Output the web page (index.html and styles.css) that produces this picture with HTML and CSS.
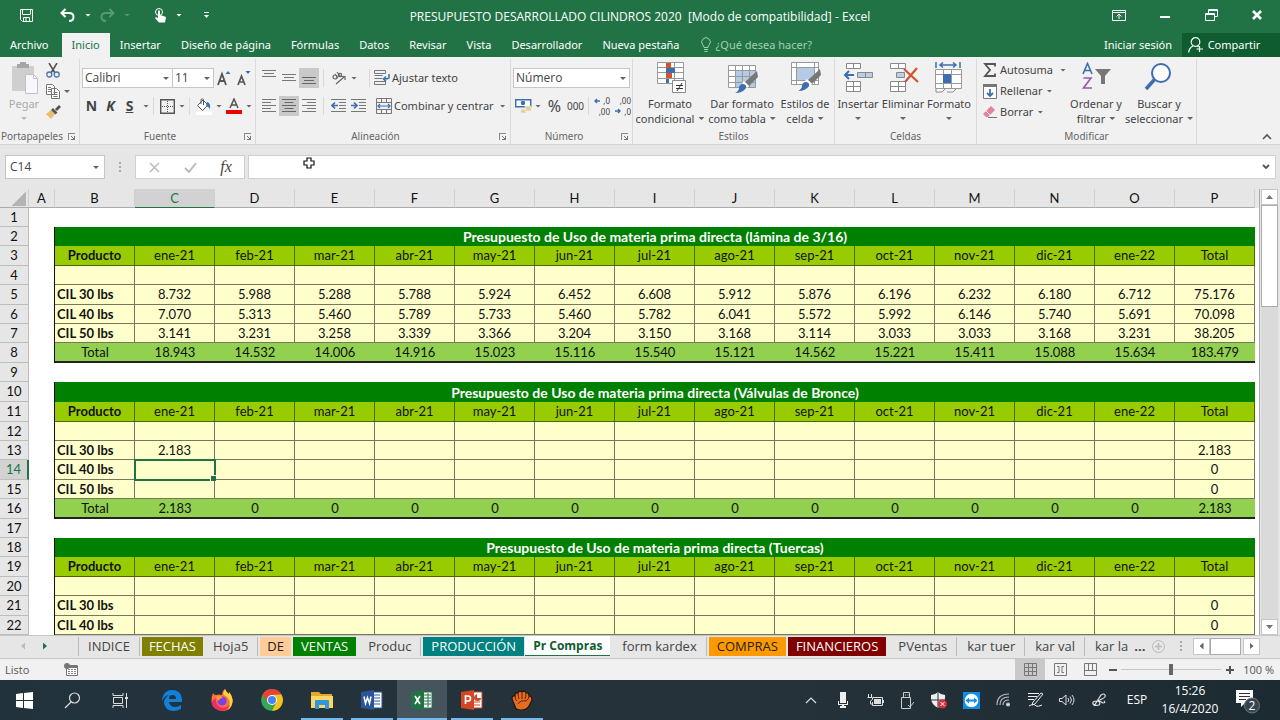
FILE: index.html
```html
<!DOCTYPE html>
<html lang="es">
<head>
<meta charset="utf-8">
<title>PRESUPUESTO DESARROLLADO CILINDROS 2020 - Excel</title>
<link rel="stylesheet" href="styles.css">
</head>
<body>
<header class="titlebar">
  <div class="quick">
    <button class="q-save" aria-label="Guardar"><svg width="13" height="13" viewBox="0 0 13 13" fill="none" stroke="#fff"><path d="M.5.5h12v12H2.500l-2-2zM2.500.5v5h8v-5M3.500 12.500v-4h6v4M6 9v3"/></svg></button>
    <button class="q-undo" aria-label="Deshacer"><svg width="16" height="14" viewBox="0 0 16 14" fill="none" stroke="#fff" stroke-width="2"><path d="M5.500 1 1.500 5l4 4M2 5h7q4.500 0 4.500 4t-4.500 4"/></svg></button><i class="dd light"></i>
    <button class="q-redo" aria-label="Rehacer"><svg width="16" height="14" viewBox="0 0 16 14" fill="none" stroke="#569976" stroke-width="2"><path d="m10.500 1 4 4-4 4M14 5H7q-4.500 0-4.500 4T7 13"/></svg></button><i class="dd faded"></i>
    <button class="q-touch" aria-label="Modo táctil"><svg width="13" height="15" viewBox="0 0 13 15"><circle cx="5" cy="4" r="3.500" fill="none" stroke="#fff"/><path fill="#fff" d="M4 3q1-1.500 2 0v4l5 1.500 1 1-1 5H5L1 10l1-1 2 1z"/></svg></button><i class="dd light"></i>
    <button class="q-more" aria-label="Personalizar"><svg width="5" height="6" viewBox="0 0 5 6" fill="#fff"><path d="M0 0h5v1H0zM0 3h5L2.500 6z"/></svg></button>
  </div>
  <h1>PRESUPUESTO DESARROLLADO CILINDROS 2020&nbsp; [Modo de compatibilidad] - Excel</h1>
  <div class="winctl">
    <button aria-label="Opciones de cinta"><svg width="14" height="11" viewBox="0 0 14 11" fill="none" stroke="#fff"><path d="M.5.5h13v10H.5zM.5 2.500h13M7 9V4M4.500 6.500 7 4l2.500 2.500"/></svg></button>
    <button aria-label="Minimizar"><svg width="10" height="11" viewBox="0 0 10 11"><path d="M0 6h10v2H0z" fill="#fff"/></svg></button>
    <button aria-label="Restaurar"><svg width="13" height="12" viewBox="0 0 13 12" fill="none" stroke="#fff"><path d="M.5 4.500h9v7h-9zM.5 5.500h9M3.500 4V.5h9v7H10M3.500 1.500h9"/></svg></button>
    <button aria-label="Cerrar"><svg width="10" height="10" viewBox="0 0 10 10"><path d="m1 1 8 8M9 1 1 9" stroke="#fff" stroke-width="2.600"/></svg></button>
  </div>
</header>
<nav class="tabs">
  <button>Archivo</button><button class="on">Inicio</button><button>Insertar</button><button>Diseño de página</button><button>Fórmulas</button><button>Datos</button><button>Revisar</button><button>Vista</button><button>Desarrollador</button><button>Nueva pestaña</button>
  <button class="tell"><svg width="12" height="15" viewBox="0 0 12 15" fill="none" stroke="#9fd0b4"><path d="M4 10.500q0-1.500-1.500-3a4.300 4.300 0 1 1 7 0Q8 9 8 10.500zM4 12.500h4M4.500 14.500h3"/></svg>¿Qué desea hacer?</button>
  <button class="signin">Iniciar sesión</button>
  <button class="share"><svg width="15" height="16" viewBox="0 0 15 16" fill="none" stroke="#fff" stroke-width="1.200"><circle cx="7.500" cy="5" r="4.300"/><path d="M.7 15.500Q1 11 5 9M9.500 9l1 1M11.500 9v6M8.500 12H15"/></svg>Compartir</button>
</nav>
<main class="ribbon">
  <section class="group g-clip">
    <div class="body">
      <button class="big paste"><svg width="30" height="32" viewBox="0 0 30 32"><path d="M3 4h22v25H3z" fill="#cfcfcf"/><path d="M8 2h3V0h6v2h3v4H8z" fill="#a6a6a6"/><path d="M16.500 12.500h8l4 4v15h-12z" fill="#faf7fc" stroke="#c3bfc6"/><path d="M24.500 12.500v4h4" fill="none" stroke="#c3bfc6"/></svg><span>Pegar</span><i class="dd faint"></i></button>
      <div class="stack">
        <button aria-label="Cortar"><svg width="14" height="15" viewBox="0 0 14 15" fill="none"><path d="m3 0 6 10M11 0 5 10" stroke="#555" stroke-width="1.600"/><circle cx="3.300" cy="11.500" r="2.500" stroke="#4a77ad" stroke-width="1.300"/><circle cx="10.700" cy="11.500" r="2.500" stroke="#4a77ad" stroke-width="1.300"/></svg></button>
        <button aria-label="Copiar"><svg width="14" height="15" viewBox="0 0 14 15" fill="#fff" stroke="#777"><path d="M.5.5h6l2 2v8h-8zM5.500 4.500h5l3 3v7h-8z"/><path d="M2 3.500h3M2 5.500h3M2 7.500h3M7.500 8.500h4M7.500 10.500h4M7.500 12.500h4"/></svg><i class="dd"></i></button>
        <button aria-label="Copiar formato"><svg width="15" height="14" viewBox="0 0 15 14"><path d="m0 9 5-4 4 4-4 5z" fill="#e9bf6e"/><path d="m5 5 2-2 4.500 4.500-2 2zM9 4l4-4 2 2-4 4z" fill="#555"/></svg></button>
      </div>
    </div>
    <footer><span>Portapapeles</span><button class="launch" aria-label="Más de Portapapeles"></button></footer>
  </section>
  <section class="group g-font">
    <div class="body rows">
      <div class="row">
        <label class="pick w-font"><select aria-label="Fuente"><option>Calibri</option></select></label><label class="pick w-size"><select aria-label="Tamaño"><option>11</option></select></label>
        <button class="grow" aria-label="Aumentar fuente"><svg width="14" height="15" viewBox="0 0 14 15"><path d="m1 14 4-11 4 11M2.500 10h5" fill="none" stroke="#555" stroke-width="1.800"/><path d="m8.500 3 2.500-3 2.500 3z" fill="#3c6eb0"/></svg></button>
        <button class="shrink" aria-label="Reducir fuente"><svg width="14" height="15" viewBox="0 0 14 15"><path d="M1 14 4.500 5 8 14M2.300 11h4.500" fill="none" stroke="#555" stroke-width="1.700"/><path d="M8.500 0h5L11 3z" fill="#3c6eb0"/></svg></button>
      </div>
      <div class="row marks">
        <button class="glyph"><b>N</b></button><button class="glyph"><b><em>K</em></b></button><button class="glyph"><b><u>S</u></b></button><i class="dd"></i><i class="sep"></i>
        <button class="pad" aria-label="Bordes"><svg width="15" height="15" viewBox="0 0 15 15" fill="none" stroke="#555"><path d="M.7.7h13.600v13.600H.7z" stroke-width="1.400"/><path d="M7.500 2v12M2 7.500h12" stroke-dasharray="1 1"/></svg></button><i class="dd"></i><i class="sep"></i>
        <button class="pad" aria-label="Relleno"><svg width="16" height="17" viewBox="0 0 16 17"><path d="m7 2 5 5-5.500 5.500-5-5z" fill="#fff" stroke="#555"/><path d="M5 6V1.500q1-1.500 2.500 0V7" fill="none" stroke="#555"/><path d="M11 4q4 1 3 7-2-3-4-3z" fill="#3c6eb0"/><path d="M0 13.500h16V17H0z" fill="#fff"/></svg></button><i class="dd"></i>
        <button class="pad2" aria-label="Color de fuente"><svg width="16" height="16" viewBox="0 0 16 16"><path d="m4 10 4-9 4 9M5.500 7h5" fill="none" stroke="#555" stroke-width="1.500"/><path d="M0 12h16v4H0z" fill="#e00"/></svg></button><i class="dd"></i>
      </div>
    </div>
    <footer><span>Fuente</span><button class="launch" aria-label="Más de Fuente"></button></footer>
  </section>
  <section class="group g-align">
    <div class="body rows">
      <div class="row">
        <button class="al" aria-label="Alinear arriba"><svg width="14" height="16" viewBox="0 0 14 16" stroke="#777"><path d="M0 .5h14M2 3.500h10M0 6.500h14"/></svg></button><button class="al" aria-label="Alinear en medio"><svg width="14" height="16" viewBox="0 0 14 16" stroke="#777"><path d="M0 4.500h14M2 7.500h10M0 10.500h14"/></svg></button><button class="al on" aria-label="Alinear abajo"><svg width="14" height="16" viewBox="0 0 14 16" stroke="#666"><path d="M0 7.500h14M2 10.500h10M0 13.500h14"/></svg></button><i class="sep"></i>
        <button class="orient" aria-label="Orientación"><svg width="15" height="14" viewBox="0 0 15 14" fill="none" stroke="#666" stroke-width="1.200"><circle cx="3" cy="6" r="2"/><path d="m3 3 3 4M5 1l4 5"/><circle cx="8" cy="4" r="1.700"/><path d="m4 13 8-7M9.500 5.500H13V9"/></svg></button><i class="dd"></i><i class="sep far1"></i>
        <button class="txt"><svg width="16" height="16" viewBox="0 0 16 16" fill="none"><path d="M.5.5h11v3H.5zM.5 5.500h8M.5 8.500h8M.5 11.500h11v3H.5z" stroke="#777"/><path d="M15 4v4q-1 1-5 1M12 6.500 9.500 9l2.500 2.500" stroke="#3c6eb0" stroke-width="1.500"/></svg>Ajustar texto</button>
      </div>
      <div class="row">
        <button class="al" aria-label="Izquierda"><svg width="14" height="16" viewBox="0 0 14 16" stroke="#777"><path d="M0 1.500h14M0 4.500h9M0 7.500h14M0 10.500h9M0 13.500h14"/></svg></button><button class="al on" aria-label="Centrar"><svg width="14" height="16" viewBox="0 0 14 16" stroke="#666"><path d="M0 1.500h14M2.500 4.500h9M0 7.500h14M2.500 10.500h9M0 13.500h14"/></svg></button><button class="al" aria-label="Derecha"><svg width="14" height="16" viewBox="0 0 14 16" stroke="#777"><path d="M0 1.500h14M5 4.500h9M0 7.500h14M5 10.500h9M0 13.500h14"/></svg></button><i class="sep"></i>
        <button class="al" aria-label="Reducir sangría"><svg width="15" height="16" viewBox="0 0 15 16" fill="none" stroke="#777"><path d="M0 1.500h15M8 4.500h7M8 7.500h7M8 10.500h7M0 13.500h15"/><path d="M7 7.500H1M4 4.500l-3 3 3 3" stroke="#3c6eb0" stroke-width="1.700"/></svg></button><button class="al" aria-label="Aumentar sangría"><svg width="15" height="16" viewBox="0 0 15 16" fill="none" stroke="#777"><path d="M0 1.500h15M8 4.500h7M8 7.500h7M8 10.500h7M0 13.500h15"/><path d="M0 7.500h6M3 4.500l3 3-3 3" stroke="#3c6eb0" stroke-width="1.700"/></svg></button><i class="sep far2"></i>
        <button class="txt"><svg width="16" height="16" viewBox="0 0 16 16" fill="none" stroke="#777"><path d="M.5.5h15v15H.5zM.5 4.500h15M.5 11.500h15M5.500.5v4M10.500.5v4M5.500 11.500v4M10.500 11.500v4"/><path d="M2 8h12M4 6 2 8l2 2M12 6l2 2-2 2" stroke="#3c6eb0" stroke-width="1.200"/></svg>Combinar y centrar</button><i class="dd last"></i>
      </div>
    </div>
    <footer><span>Alineación</span><button class="launch" aria-label="Más de Alineación"></button></footer>
  </section>
  <section class="group g-num">
    <div class="body rows">
      <div class="row"><label class="pick w-num"><select aria-label="Formato de número"><option>Número</option></select></label></div>
      <div class="row nums">
        <button aria-label="Moneda"><svg width="17" height="16" viewBox="0 0 17 16"><path d="M.7 1.700h15v7h-15z" fill="#fff" stroke="#3c6eb0" stroke-width="1.500"/><circle cx="8" cy="5" r="2.200" fill="#3c6eb0"/><path d="M10 8h6v5h-6zM6 11h5v4H6z" fill="#e9cf95" stroke="#f1f1f1" stroke-width=".5"/></svg></button><i class="dd"></i><button class="pct">%</button><button class="mil">000</button><i class="sep"></i>
        <button class="dec" aria-label="Aumentar decimales"><span>,0</span><span>,00</span><svg width="6" height="6" viewBox="0 0 6 6"><path d="M6 3H1m2-2L1 3l2 2" fill="none" stroke="#3c6eb0" stroke-width="1.400"/></svg></button>
        <button class="dec low" aria-label="Disminuir decimales"><span>,00</span><span>,0</span><svg width="6" height="6" viewBox="0 0 6 6"><path d="M0 3h5M3 1l2 2-2 2" fill="none" stroke="#3c6eb0" stroke-width="1.400"/></svg></button>
      </div>
    </div>
    <footer><span>Número</span><button class="launch" aria-label="Más de Número"></button></footer>
  </section>
  <section class="group g-style">
    <div class="body">
      <button class="big b-cond"><svg width="32" height="32" viewBox="0 0 32 32"><path d="M3.500.5h26v21h-26zM3.500 5.500h26M3.500 10.500h26M3.500 16.500h26M12.500.5v21M20.500.5v21" fill="#fff" stroke="#999"/><path d="M12 1h5v5h-5zM12 11h6v5h-6z" fill="#d35230"/><path d="M12 6h9v5h-9zM12 17h3v4h-3z" fill="#3c6eb0"/><path d="M18.500 18.500h13v12h-13z" fill="#fff" stroke="#888"/><path d="M22 23.500h7M22 26.500h7M28 21l-5 8" stroke="#333"/></svg><span>Formato</span><span>condicional<i class="dd"></i></span></button>
      <button class="big b-table"><svg width="32" height="32" viewBox="0 0 32 32"><path d="M2.500 3.500h27v22h-27z" fill="#fff"/><path d="M9 9h20v16H9z" fill="#b4cbe6"/><path d="M2.500 3.500h27v22h-27zM2.500 8.500h27M2.500 14.500h27M2.500 20.500h27M9.500 3.500v22M16.500 3.500v22M23.500 3.500v22" fill="none" stroke="#999"/><path d="m31 9 1 6-9 9-4-4z" fill="#777"/><path d="m18 19 5 5-2 2-5-5z" fill="#fff"/><path d="M16 22q5 0 4 4-3 5-11 5 4-2 4-5 0-3 3-4z" fill="#3c6eb0"/></svg><span>Dar formato</span><span>como tabla<i class="dd"></i></span></button>
      <button class="big b-cell"><svg width="32" height="32" viewBox="0 0 32 32"><path d="M2.500.5h27v22h-27z" fill="#fff" stroke="#999"/><path d="M8 6h17v12H8z" fill="#b4cbe6"/><path d="M2.500 5.500h27M2.500 18.500h27M7.500.5v22M25.500.5v22" stroke="#999"/><path d="m31 7 1 6-9 9-4-4z" fill="#777"/><path d="m18 17 5 5-2 2-5-5z" fill="#fff"/><path d="M16 20q5 0 4 4-3 5-11 5 4-2 4-5 0-3 3-4z" fill="#3c6eb0"/></svg><span>Estilos de</span><span>celda<i class="dd"></i></span></button>
    </div>
    <footer><span>Estilos</span></footer>
  </section>
  <section class="group g-cells">
    <div class="body">
      <button class="big b-ins"><svg width="32" height="32" viewBox="0 0 32 32"><path d="M4.500 1.500h14v5h-14zM11.500 1.500v5M4.500 19.500h14v10h-14zM4.500 24.500h14M11.500 19.500v10" fill="#fff" stroke="#888"/><path d="M15.500 10.500h15v5h-15zM23.500 10.500v5" fill="#b9cfe6" stroke="#888"/><path d="M12 13H3m4-4-4 4 4 4" fill="none" stroke="#3c6eb0" stroke-width="2"/></svg><span>Insertar</span><i class="dd"></i></button>
      <button class="big b-del"><svg width="32" height="32" viewBox="0 0 32 32"><path d="M3.500 1.500h15v5h-15zM11.500 1.500v5M3.500 19.500h15v10h-15zM3.500 24.500h15M11.500 19.500v10" fill="#fff" stroke="#888"/><path d="M9.500 10.500h8v5h-8z" fill="#b9cfe6" stroke="#888"/><path d="m17 7 14 13M30 6 18 20" fill="none" stroke="#d35230" stroke-width="2.200"/></svg><span>Eliminar</span><i class="dd"></i></button>
      <button class="big b-fmt"><svg width="32" height="32" viewBox="0 0 32 32"><path d="M3 0v6M27 0v6M7 3h16M10 .5 7 3l3 2.500M20 .5 23 3l-3 2.500" fill="none" stroke="#3c6eb0" stroke-width="1.500"/><path d="M2.500 7.500h26v19h-26zM2.500 12.500h26M2.500 21.500h26M10.500 7.500v19M18.500 7.500v19" fill="#fff" stroke="#999"/><path d="M10 12h8v9h-8z" fill="#3c6eb0"/><path d="M3 27v3h6l3-3m2 3h6l3-3" fill="#fff" stroke="#888"/></svg><span>Formato</span><i class="dd"></i></button>
    </div>
    <footer><span>Celdas</span></footer>
  </section>
  <section class="group g-edit">
    <div class="body">
      <div class="stack words">
        <button><svg width="14" height="14" viewBox="0 0 14 14"><path d="M12 3.500V1H2l5 6-5 6h10v-2.500" fill="none" stroke="#555" stroke-width="1.800"/></svg>Autosuma<i class="dd wide"></i></button>
        <button><svg width="14" height="15" viewBox="0 0 14 15"><path d="M.5.5h13v14H.5z" fill="#fff" stroke="#777"/><path d="M0 0h14v3H0z" fill="#777"/><path d="M7 5v7M4 9l3 3 3-3" fill="none" stroke="#3c6eb0" stroke-width="1.800"/></svg>Rellenar<i class="dd"></i></button>
        <button><svg width="14" height="14" viewBox="0 0 14 14"><path d="m0 9 8-8 4 4-7 7H3z" fill="#e2849b"/><path d="m3 6 4 4" stroke="#f1f1f1"/><path d="M5 12.500h9" stroke="#777"/></svg>Borrar<i class="dd"></i></button>
      </div>
      <button class="big b-sort"><svg width="32" height="32" viewBox="0 0 32 32" fill="none"><path d="m3 12 4.500-10.500L12 12M4.500 8.500h6" stroke="#3c6eb0" stroke-width="1.600"/><path d="M3.500 16H11L3.500 26H12" stroke="#9458b0" stroke-width="1.600"/><path d="M15 7h16l-6 7v8h-4v-8z" fill="#777"/></svg><span>Ordenar y</span><span>filtrar<i class="dd"></i></span></button>
      <button class="big b-find"><svg width="32" height="32" viewBox="0 0 32 32" fill="none"><circle cx="18" cy="11" r="9" fill="#fff" stroke="#3c6eb0" stroke-width="2"/><path d="M11.500 17.500 3 27" stroke="#3c6eb0" stroke-width="3.500"/></svg><span>Buscar y</span><span>seleccionar<i class="dd"></i></span></button>
    </div>
    <footer><span>Modificar</span></footer>
  </section>
  <button class="collapse" aria-label="Contraer la cinta"><svg width="10" height="7" viewBox="0 0 10 7"><path d="m1 6 4-4 4 4" fill="none" stroke="#555" stroke-width="1.600"/></svg></button>
</main>
<section class="formula">
  <label class="pick namebox"><select aria-label="Cuadro de nombres"><option>C14</option></select></label>
  <i class="dots"></i>
  <div class="fx">
    <button aria-label="Cancelar"><svg width="11" height="11" viewBox="0 0 11 11"><path d="m1 1 9 9M10 1l-9 9" stroke="#bbb" stroke-width="1.500"/></svg></button>
    <button aria-label="Introducir"><svg width="13" height="11" viewBox="0 0 13 11"><path d="m1 6 4 4 7-9" fill="none" stroke="#bbb" stroke-width="2"/></svg></button>
    <button class="fn"><em>fx</em></button>
  </div>
  <div class="entry"><input type="text" aria-label="Barra de fórmulas"><button aria-label="Expandir"><svg width="8" height="6" viewBox="0 0 8 6"><path d="m1 1 3 3 3-3" fill="none" stroke="#555" stroke-width="1.800"/></svg></button>
  <svg class="cursor" width="12" height="12" viewBox="0 0 12 12"><path d="M4 1h4v3h3v4H8v3H4V8H1V4h3z" fill="#fff" stroke="#111" stroke-width="1.200"/></svg></div>
</section>
<section class="sheetarea">
<div class="view">
<table class="sheet">
<colgroup><col class="c-num"><col class="c-a"><col span="15" class="c-std"></colgroup>
<thead><tr><th class="corner"></th><th>A</th><th>B</th><th class="sel">C</th><th>D</th><th>E</th><th>F</th><th>G</th><th>H</th><th>I</th><th>J</th><th>K</th><th>L</th><th>M</th><th>N</th><th>O</th><th>P</th></tr></thead>
<tbody>
<tr><th>1</th><td colspan="16"></td></tr>
<tr class="ttl"><th>2</th><td></td><td colspan="15">Presupuesto de Uso de materia prima directa (lámina de 3/16)</td></tr>
<tr class="hd tall"><th>3</th><td></td><td>Producto</td><td>ene-21</td><td>feb-21</td><td>mar-21</td><td>abr-21</td><td>may-21</td><td>jun-21</td><td>jul-21</td><td>ago-21</td><td>sep-21</td><td>oct-21</td><td>nov-21</td><td>dic-21</td><td>ene-22</td><td>Total</td></tr>
<tr class="dt"><th>4</th><td></td><td></td><td></td><td></td><td></td><td></td><td></td><td></td><td></td><td></td><td></td><td></td><td></td><td></td><td></td><td></td></tr>
<tr class="dt tall"><th>5</th><td></td><td>CIL 30 lbs</td><td>8.732</td><td>5.988</td><td>5.288</td><td>5.788</td><td>5.924</td><td>6.452</td><td>6.608</td><td>5.912</td><td>5.876</td><td>6.196</td><td>6.232</td><td>6.180</td><td>6.712</td><td>75.176</td></tr>
<tr class="dt"><th>6</th><td></td><td>CIL 40 lbs</td><td>7.070</td><td>5.313</td><td>5.460</td><td>5.789</td><td>5.733</td><td>5.460</td><td>5.782</td><td>6.041</td><td>5.572</td><td>5.992</td><td>6.146</td><td>5.740</td><td>5.691</td><td>70.098</td></tr>
<tr class="dt"><th>7</th><td></td><td>CIL 50 lbs</td><td>3.141</td><td>3.231</td><td>3.258</td><td>3.339</td><td>3.366</td><td>3.204</td><td>3.150</td><td>3.168</td><td>3.114</td><td>3.033</td><td>3.033</td><td>3.168</td><td>3.231</td><td>38.205</td></tr>
<tr class="tt tall"><th>8</th><td></td><td>Total</td><td>18.943</td><td>14.532</td><td>14.006</td><td>14.916</td><td>15.023</td><td>15.116</td><td>15.540</td><td>15.121</td><td>14.562</td><td>15.221</td><td>15.411</td><td>15.088</td><td>15.634</td><td>183.479</td></tr>
<tr><th>9</th><td colspan="16"></td></tr>
<tr class="ttl tall"><th>10</th><td></td><td colspan="15">Presupuesto de Uso de materia prima directa (Válvulas de Bronce)</td></tr>
<tr class="hd tall"><th>11</th><td></td><td>Producto</td><td>ene-21</td><td>feb-21</td><td>mar-21</td><td>abr-21</td><td>may-21</td><td>jun-21</td><td>jul-21</td><td>ago-21</td><td>sep-21</td><td>oct-21</td><td>nov-21</td><td>dic-21</td><td>ene-22</td><td>Total</td></tr>
<tr class="dt"><th>12</th><td></td><td></td><td></td><td></td><td></td><td></td><td></td><td></td><td></td><td></td><td></td><td></td><td></td><td></td><td></td><td></td></tr>
<tr class="dt"><th>13</th><td></td><td>CIL 30 lbs</td><td>2.183</td><td></td><td></td><td></td><td></td><td></td><td></td><td></td><td></td><td></td><td></td><td></td><td></td><td>2.183</td></tr>
<tr class="dt tall"><th class="sel">14</th><td></td><td>CIL 40 lbs</td><td class="active"></td><td></td><td></td><td></td><td></td><td></td><td></td><td></td><td></td><td></td><td></td><td></td><td></td><td>0</td></tr>
<tr class="dt"><th>15</th><td></td><td>CIL 50 lbs</td><td></td><td></td><td></td><td></td><td></td><td></td><td></td><td></td><td></td><td></td><td></td><td></td><td></td><td>0</td></tr>
<tr class="tt tall"><th>16</th><td></td><td>Total</td><td>2.183</td><td>0</td><td>0</td><td>0</td><td>0</td><td>0</td><td>0</td><td>0</td><td>0</td><td>0</td><td>0</td><td>0</td><td>0</td><td>2.183</td></tr>
<tr><th>17</th><td colspan="16"></td></tr>
<tr class="ttl"><th>18</th><td></td><td colspan="15">Presupuesto de Uso de materia prima directa (Tuercas)</td></tr>
<tr class="hd tall"><th>19</th><td></td><td>Producto</td><td>ene-21</td><td>feb-21</td><td>mar-21</td><td>abr-21</td><td>may-21</td><td>jun-21</td><td>jul-21</td><td>ago-21</td><td>sep-21</td><td>oct-21</td><td>nov-21</td><td>dic-21</td><td>ene-22</td><td>Total</td></tr>
<tr class="dt"><th>20</th><td></td><td></td><td></td><td></td><td></td><td></td><td></td><td></td><td></td><td></td><td></td><td></td><td></td><td></td><td></td><td></td></tr>
<tr class="dt tall"><th>21</th><td></td><td>CIL 30 lbs</td><td></td><td></td><td></td><td></td><td></td><td></td><td></td><td></td><td></td><td></td><td></td><td></td><td></td><td>0</td></tr>
<tr class="dt"><th>22</th><td></td><td>CIL 40 lbs</td><td></td><td></td><td></td><td></td><td></td><td></td><td></td><td></td><td></td><td></td><td></td><td></td><td></td><td>0</td></tr>
<tr class="dt"><th></th><td></td><td></td><td></td><td></td><td></td><td></td><td></td><td></td><td></td><td></td><td></td><td></td><td></td><td></td><td></td><td></td></tr>
</tbody>
</table>
</div>
<div class="vscroll"><button class="up" aria-label="Subir"></button><div class="thumb"></div><button class="down" aria-label="Bajar"></button></div>
</section>
<nav class="sheettabs">
  <button class="prev" aria-label="Anterior"></button><button class="next" aria-label="Siguiente"></button>
  <button class="st plain first">INDICE</button><button class="st olive">FECHAS</button><button class="st plain">Hoja5</button><button class="st peach">DE</button><button class="st green">VENTAS</button><button class="st plain">Produc</button><button class="st teal">PRODUCCIÓN</button><button class="st current">Pr Compras</button><button class="st plain">form kardex</button><button class="st orange">COMPRAS</button><button class="st maroon">FINANCIEROS</button><button class="st plain">PVentas</button><button class="st plain">kar tuer</button><button class="st plain">kar val</button><button class="st plain cut">kar la<b>...</b></button>
  <button class="add" aria-label="Hoja nueva"><svg width="13" height="13" viewBox="0 0 13 13" fill="none" stroke="#bbb"><circle cx="6.500" cy="6.500" r="6"/><path d="M6.500 3v7M3 6.500h7" stroke-width="1.500"/></svg></button>
  <i class="dots"></i>
  <div class="hscroll"><button class="left" aria-label="Izquierda"></button><div class="thumb"></div><button class="right" aria-label="Derecha"></button></div>
</nav>
<footer class="status">
  <span>Listo</span>
  <button class="macro" aria-label="Grabar macro"><svg width="14" height="13" viewBox="0 0 14 13"><path d="M2.500 2.500h11v10h-11z" fill="#fff" stroke="#777"/><path d="M3 3h11v2H3z" fill="#777"/><path d="M4 6.500h8M4 8.500h8M4 10.500h8" stroke="#888" stroke-dasharray="2 1"/><circle cx="3" cy="3" r="3" fill="#777"/></svg></button>
  <div class="views">
    <button class="on" aria-label="Normal"><svg width="13" height="13" viewBox="0 0 13 13" fill="none" stroke="#777"><path d="M.5.5h12v12H.5zM.5 4.500h12M.5 8.500h12M4.500.5v12M8.500.5v12"/></svg></button>
    <button aria-label="Diseño de página"><svg width="13" height="13" viewBox="0 0 13 13" fill="none" stroke="#777"><path d="M.5.5h12v12H.5zM3 3.500h2v6H3M10 3.500H8v6h2"/></svg></button>
    <button aria-label="Saltos de página"><svg width="13" height="13" viewBox="0 0 13 13" fill="none" stroke="#777"><path d="M.5.5h12v12H.5zM.5 7.500h12M4.500.5v7M8.500.5v7"/></svg></button>
  </div>
  <button class="zm minus" aria-label="Alejar"></button><input type="range" min="0" max="100" value="50" aria-label="Zoom"><button class="zm plus" aria-label="Acercar"></button>
  <span class="pctv">100 %</span>
</footer>
<footer class="taskbar">
  <button class="sys" aria-label="Inicio"><svg width="17" height="17" viewBox="0 0 17 17" fill="#fff"><path d="m0 2 7-1v7H0zM8 1l9-1v8H8zM0 9h7v7l-7-1zM8 9h9v8l-9-1z"/></svg></button>
  <button class="sys" aria-label="Buscar"><svg width="17" height="17" viewBox="0 0 17 17" fill="none" stroke="#ddd" stroke-width="1.200"><circle cx="10.500" cy="6" r="5"/><path d="m7 10-6 6"/></svg></button>
  <button class="sys" aria-label="Vista de tareas"><svg width="17" height="17" viewBox="0 0 17 17" fill="none" stroke="#ddd"><path d="M1 1v2.500h10V1M1 16v-2.500h10V16M1.500 5.500h9v6h-9zM14.500 1v4M14.500 7v9"/><path d="M13 5h3v2h-3z" fill="#ddd" stroke="none"/></svg></button>
  <button class="app first" aria-label="Edge"><svg width="22" height="22" viewBox="0 0 22 22"><path d="M1 10Q3 1 11 1q9 0 10 9v3H8q1 5 6 5 3 0 6-2v4q-4 2-8 2-8-1-9-8 0-5 5-8-5 1-7 6zM8 10h7q0-4-3.500-4T8 10z" fill="#1180d8"/></svg></button>
  <button class="app" aria-label="Firefox"><svg width="24" height="24" viewBox="0 0 24 24"><path d="M3 5q1 2 3 2 3-1 6 0 0-4 3-6 1 3 4 5V4q4 5 3.500 10Q21 23 12 23 3 22 1.500 14 1 9 3 5z" fill="#ff7139"/><path d="M15 1q1 3 4 5V4q4 5 3.500 10-1 6-5 8 3-4 2-9-2-5-6-6 0-4 1.500-6z" fill="#ffd43a"/><path d="M1.500 14Q3 22 12 23q6-1 8-6-5 4-10 2-5-3-4-9-3 2-4.500 4z" fill="#f12b68"/><circle cx="12" cy="13" r="4.500" fill="#7542e5"/><path d="M6 9q4-3 7 1-4 0-4 3-2-1-3-4z" fill="#ff9a2e"/></svg></button>
  <button class="app" aria-label="Chrome"><svg width="22" height="22" viewBox="0 0 22 22"><circle cx="11" cy="11" r="10.800" fill="#34a853"/><path d="M1.600 5.600A10.800 10.800 0 0 1 20.400 5.600L11 6 6.700 13.500z" fill="#ea4335"/><path d="M20.400 5.600A10.800 10.800 0 0 1 11 21.800L15.300 13.500 11 6z" fill="#fbc117"/><circle cx="11" cy="11" r="5" fill="#fff"/><circle cx="11" cy="11" r="4" fill="#4285f4"/></svg></button>
  <button class="app run" aria-label="Explorador"><svg width="22" height="18" viewBox="0 0 22 18"><path d="M0 1h8l2 2h11v14H0z" fill="#e5a82a"/><path d="M0 5h22v12H0z" fill="#fcd765"/><path d="M4 10q0-1 1-1h12q1 0 1 1v8h-4v-4H8v4H4z" fill="#3296dc"/></svg></button>
  <button class="app run" aria-label="Word"><svg width="22" height="20" viewBox="0 0 22 20"><path d="M12 2h9v16h-9z" fill="#fff" stroke="#2b579a"/><path d="M13 5h6M13 8h6M13 11h6M13 14h6" stroke="#2b579a"/><path d="m0 2 13-2v20L0 18z" fill="#2b579a"/><path d="m3 6.500 1.500 7 2-6 2 6 1.500-7" fill="none" stroke="#fff" stroke-width="1.500"/></svg></button>
  <button class="app run cur" aria-label="Excel"><svg width="22" height="20" viewBox="0 0 22 20"><path d="M12 2h9v16h-9z" fill="#fff" stroke="#217346"/><path d="M13 5h7M13 8h7M13 11h7M13 14h7M17 3v14" stroke="#217346"/><path d="m0 2 13-2v20L0 18z" fill="#217346"/><path d="m4 6 5 8M9 6l-5 8" stroke="#fff" stroke-width="1.600"/></svg></button>
  <button class="app run" aria-label="PowerPoint"><svg width="22" height="20" viewBox="0 0 22 20"><path d="M12 2h9v16h-9z" fill="#fff" stroke="#d24726"/><path d="M13 12h6M13 15h6" stroke="#d24726"/><path d="M16 4v4h4q0 3-3.500 3T13 8q0-3 3-4z" fill="#d24726"/><path d="m0 2 13-2v20L0 18z" fill="#d24726"/><path d="M4.500 14V6H7q2.500 0 2.500 2.500T7 11H5" fill="none" stroke="#fff" stroke-width="1.700"/></svg></button>
  <button class="app run" aria-label="Grabador"><svg width="22" height="20" viewBox="0 0 22 20"><path d="M1 9q0-4 3-3 0-4 3-3 1-3 4-1 3-2 4 1 3-1 3 3 3 0 3 4l-3 6q-2 4-8 4t-6-4z" fill="#e46b22" stroke="#2a1208" stroke-width="1.200"/><path d="M4 6q0 4 2 5M7 3q0 4 1 6M11 2v7M15 3q0 4-1 6M18 6q0 3-3 5-6-1-8 3" fill="none" stroke="#5c240c"/></svg></button>
  <div class="tray">
    <button aria-label="Mostrar iconos"><svg width="12" height="7" viewBox="0 0 12 7"><path d="m1 6 5-5 5 5" fill="none" stroke="#ddd" stroke-width="1.200"/></svg></button>
    <button aria-label="Micrófono"><svg width="10" height="16" viewBox="0 0 10 16" fill="#eee"><path d="M2 0h6v11H2zM0 9h1v3h8V9h1v4H6v1h2v2H2v-2h2v-1H0z"/></svg></button>
    <button aria-label="Batería"><svg width="17" height="12" viewBox="0 0 17 12" fill="none" stroke="#ddd"><path d="M6 3.500h9.500v8h-10V8M16.500 6v3M1.500 0v3M4.500 0v3M.5 3.500h5v2l-2 1.500v3h2"/><path d="M7 5h7v5H7z" fill="#ddd" stroke="none"/></svg></button>
    <button aria-label="USB"><svg width="14" height="17" viewBox="0 0 14 17" fill="none" stroke="#ccc"><path d="M3.500 5V.5h6V5M1.500 5.500h9v11h-9zM5 3h1M7.500 3h1M8 13l2 2 4-5"/></svg></button>
    <button aria-label="Seguridad"><svg width="16" height="17" viewBox="0 0 16 17"><path d="M0 3q4 0 7-3 3 3 7 3 1 9-7 13Q-1 12 0 3z" fill="#eee"/><path d="M7 0v16M0 8h14" stroke="#263138"/><circle cx="11.500" cy="12" r="4.500" fill="#d32f3c"/><path d="m9.500 10 4 4M13.500 10l-4 4" stroke="#fff"/></svg></button>
    <button aria-label="TeamViewer"><svg width="17" height="17" viewBox="0 0 17 17"><path d="M0 0h17v17H0z" fill="#0e8ee9"/><circle cx="8.500" cy="8.500" r="6.800" fill="#fff"/><path d="m2.500 8.500 3.500-3v2h5v-2l3.500 3-3.500 3v-2H6v2z" fill="#0e8ee9"/></svg></button>
    <button aria-label="Red"><svg width="14" height="14" viewBox="0 0 14 14" fill="none" stroke="#bbb" stroke-width="1.200"><path d="M1 12Q1 1 13 1M4 12q0-8 9-8M7 12q0-5 6-5"/><circle cx="12" cy="11.500" r="1.500" fill="#eee"/></svg></button>
    <button aria-label="Lápiz"><svg width="15" height="16" viewBox="0 0 15 16" fill="none" stroke="#eee"><path d="M0 1.500h11M0 4.500h9M0 7.500h6M13 1 5 10l-1 3 3-1 8-10zM1 14q5-3 7 0 2 1 6-1"/></svg></button>
    <button aria-label="Volumen"><svg width="16" height="12" viewBox="0 0 16 12" fill="none" stroke="#ddd"><path d="M.5 4.500H3L7 1v10L3 7.500H.5zM9 4q1.500 2 0 4M11 2.500q3 3.500 0 7M13 1q4 5 0 10"/></svg></button>
    <button aria-label="Tinta"><svg width="14" height="14" viewBox="0 0 14 14" fill="none" stroke="#ddd" stroke-width="1.200"><path d="m2 13 7-11q3-2 4 0 1 2-3 4L6 8q3 2 1 4-4 1-6-1-1-3 4-3 4 0 6 2 3 0 1-2"/></svg></button>
    <button class="lang">ESP</button>
    <button class="clock"><span>15:26</span><span>16/4/2020</span></button>
    <button class="note" aria-label="Notificaciones"><svg width="24" height="24" viewBox="0 0 24 24"><path d="M0 0h17v13H9l-4 4v-4H0z" fill="#fff"/><path d="M3 3.500h11M3 6.500h11M3 9.500h7" stroke="#333"/><circle cx="16" cy="15.500" r="7.500" fill="#37444c" stroke="#707a80"/></svg><span>2</span></button>
  </div>
</footer>
</body>
</html>
```
FILE: styles.css
```css
* { box-sizing: border-box; }
body {
  margin: 0;
  height: 100vh;
  display: flex;
  flex-direction: column;
  overflow: hidden;
  background: #e6e6e6;
  color: #444;
  font: 12px/16px "Open Sans", "Noto Sans", sans-serif;
}
button, select, input { font: inherit; color: inherit; margin: 0; padding: 0; border: 0; background: none; }
button { display: flex; align-items: center; justify-content: center; white-space: nowrap; }
svg { display: block; flex: none; }

/* drop-down arrow, separators */
.dd { display: inline-block; flex: none; width: 6px; height: 3px; margin: 0 4px; background: #666; clip-path: polygon(0 0, 100% 0, 50% 100%); }
.dd.light { background: #fff; }
.dd.faded { background: #569976; }
.dd.faint { background: #bbb; }
.sep { flex: none; width: 1px; height: 18px; background: #d8d8d8; }

/* title bar */
.titlebar { flex: none; height: 33px; display: grid; grid-template-columns: 1fr auto 1fr; background: #217346; color: #fff; }
.titlebar h1 { margin: 0; font-size: 12px; font-weight: 400; line-height: 33px; }
.quick { display: flex; align-items: center; padding: 0 0 3px 20px; }
.quick .dd { margin: 0 8px 0 9px; }
.q-undo { margin-left: 27px; }
.q-touch { margin-left: 16px; }
.q-more { margin-left: 14px; }
.winctl { display: flex; justify-content: flex-end; padding-bottom: 3px; }
.winctl button { width: 46px; }

/* ribbon tabs */
.tabs { flex: none; height: 24px; display: flex; background: #217346; color: #fff; font: 11px/16px "Noto Sans", "Open Sans", sans-serif; }
.tabs button { padding: 0 10px 1px; }
.tabs button.on { background: #f1f1f1; color: #217346; margin-left: 3px; }
.tabs .tell { color: #9fd0b4; gap: 4px; }
.tabs .signin { margin-left: auto; }
.tabs .share { width: 98px; background: #0e5c2f; gap: 5px; padding: 0 18px 1px 4px; }

/* ribbon */
.ribbon { flex: none; height: 88px; display: flex; background: #f1f1f1; border-bottom: 1px solid #d2d2d2; font: 11px/16px "Noto Sans", "Open Sans", sans-serif; }
.group { flex: none; display: flex; flex-direction: column; border-right: 1px solid #dadada; margin: 2px 0 0; }
.group footer { display: flex; align-items: center; height: 16px; font-size: 10px; color: #666; }
.group footer span { flex: 1; text-align: center; white-space: nowrap; }
.body { flex: 1; display: flex; padding-top: 3px; }
.body.rows { flex-direction: column; gap: 6px; padding-top: 8px; }
.row { display: flex; align-items: center; height: 22px; }
.launch { width: 7px; height: 7px; margin: 0 4px; border: solid #888; border-width: 1px 0 0 1px; background-image: linear-gradient(#777, #777), linear-gradient(#777, #777), linear-gradient(45deg, transparent 42%, #777 42%, #777 58%, transparent 58%); background-repeat: no-repeat; background-size: 4px 1px, 1px 4px, 4px 4px; background-position: right bottom, right bottom, 2px 2px; }
.g-clip { width: 80px; }
.g-font { width: 176px; }
.g-align { width: 255px; }
.g-num { width: 122px; }
.g-style { width: 202px; }
.g-cells { width: 142px; }
.g-edit { width: 220px; }

.big { flex-direction: column; justify-content: flex-start; line-height: 15px; align-self: flex-start; }
.big svg { margin-bottom: 2px; }
.big span { display: flex; align-items: center; }
.big span .dd { margin: 0 0 0 4px; }
.big > .dd { margin-top: 6px; }
.paste { width: 48px; color: #aaa; }
.stack { display: flex; flex-direction: column; align-items: flex-start; gap: 6px; padding-top: 1px; margin-left: -2px; }
.words { gap: 5px; padding: 0 0 0 6px; margin: 0; width: 90px; }
.words button { gap: 3px; height: 16px; }
.words .dd { margin: 0 0 0 1px; }
.words .dd.wide { margin-left: 4px; }

.pick { display: block; position: relative; height: 20px; border: 1px solid #c6c6c6; background: #fff; font-family: "Open Sans", sans-serif; font-size: 12px; }
.pick select { appearance: none; width: 100%; height: 100%; padding-left: 2px; display: block; }
.pick::after { content: ""; position: absolute; right: 3px; top: 8px; width: 6px; height: 3px; background: #666; clip-path: polygon(0 0, 100% 0, 50% 100%); }
.w-font { width: 91px; margin-left: 2px; }
.w-size { width: 42px; margin-left: -1px; }
.w-num { width: 117px; margin-left: 2px; }
.grow { margin-left: 3px; }
.shrink { margin-left: 6px; }
.marks { padding-left: 2px; }
.glyph { flex: none; width: 19px; font-size: 14px; }
.marks .pad { margin-left: 6px; }

.g-align .row { padding-left: 3px; }
.al { width: 20px; height: 20px; }
.al.on { background: #c9c9c9; }
.orient { margin-left: 4px; }
.g-align .al + .sep { margin: 0 4px; }
.sep.far1 { margin-left: 8px; }
.g-align .sep.far2 { margin: 0 0 0 3px; visibility: hidden; }
.txt { gap: 2px; margin-left: 4px; }
.g-align .last { margin-left: 6px; }
.nums { padding-left: 4px; }
.nums .dd { margin: 0 5px 0 3px; }
.pct { font-size: 16px; width: 17px; }
.mil { font-size: 10px; width: 25px; }
.dec { position: relative; display: block; flex: none; width: 16px; margin-left: 5px; font-size: 8px; line-height: 11px; text-align: right; }
.dec span { display: block; }
.dec svg { position: absolute; left: 0; top: 3px; }
.dec.low svg { top: 13px; }

.b-cond { width: 74px; }
.b-table { width: 70px; }
.b-cell { width: 56px; }
.b-ins { width: 46px; }
.b-del { width: 44px; }
.b-fmt { width: 48px; }
.b-sort { width: 58px; }
.b-find { width: 68px; }
.collapse { margin: auto 8px 4px auto; }

/* formula bar */
.formula { flex: none; height: 44px; display: flex; align-items: center; padding: 0 4px 0 5px; }
.namebox { width: 100px; height: 24px; }
.namebox select { padding-left: 4px; }
.namebox::after { top: 10px; right: 5px; }
.dots { width: 2px; height: 11px; margin: 0 14px; background: repeating-linear-gradient(#aaa 0 2px, transparent 2px 4px); }
.fx { display: flex; width: 110px; height: 24px; border: 1px solid #d0d0d0; background: #fff; }
.fx button { flex: 1; }
.fn { font: 16px "Liberation Serif", serif; }
.entry { position: relative; flex: 1; display: flex; height: 24px; margin-left: 3px; border: 1px solid #d0d0d0; background: #fff; }
.entry input { flex: 1; min-width: 0; }
.entry button { width: 18px; }
.cursor { position: absolute; left: 54px; top: 1px; }

/* worksheet */
.sheetarea { flex: 1; min-height: 0; display: flex; }
.view { flex: 1; min-width: 0; overflow: hidden; background: linear-gradient(#e6e6e6 19px, #fff 19px); border-right: 1px solid #ababab; }
.sheet { width: 1255px; table-layout: fixed; border-collapse: separate; border-spacing: 0; color: #111; font: 13px/17px Lato, "Open Sans", sans-serif; }
.c-num { width: 29px; }
.c-a { width: 26px; }
.c-std { width: 80px; }
.sheet tr { height: 19px; }
.sheet tr.tall { height: 20px; }
.sheet th, .sheet td { padding: 0; text-align: center; overflow: hidden; white-space: nowrap; }
.sheet th { background: #e6e6e6; font-weight: 400; border: solid #bdbdbd; border-width: 0 1px 1px 0; }
.sheet thead th { border-right-color: #cfcfcf; border-bottom-color: #ababab; }
.sheet thead .corner { background: linear-gradient(135deg, transparent 50%, #b4b4b4 50%) 12px 3px / 14px 14px no-repeat #e6e6e6; }
.sheet thead th.sel { background: #d2d2d2; color: #217346; border-bottom: 1px solid #217346; }
.sheet tbody th.sel { background: #d2d2d2; color: #217346; border-right: 2px solid #217346; }
.ttl td:last-child { background: #008000; color: #fff; font-weight: 700; font-size: 14px; }
.ttl td:nth-child(2), .hd td:nth-child(2), .dt td:nth-child(2), .tt td:nth-child(2) { border-right: 1px solid #111; }
.hd td:nth-child(n+3) { background: #99cc00; border: solid #4d6600; border-width: 0 1px 1px 0; }
.dt td:nth-child(n+3) { background: #ffffcc; border: solid #77775f; border-width: 0 1px 1px 0; }
.tt td:nth-child(n+3) { background: #92d050; border-bottom: 2px solid #222; }
.hd td:nth-child(3) { font-weight: 700; }
.dt td:nth-child(3) { font-weight: 700; text-align: left; padding-left: 2px; }
.sheet td.active { position: relative; overflow: visible; outline: 2px solid #217346; outline-offset: -1px; }
.active::after { content: ""; position: absolute; right: -2px; bottom: -2px; width: 5px; height: 5px; background: #217346; border: solid #ffffcc; border-width: 1px 0 0 1px; }

.vscroll { flex: none; width: 17px; margin: 0 2px 0 1px; display: flex; flex-direction: column; background: #dadada; }
.vscroll button { height: 16px; background: #fff; border: 1px solid #c6c6c6; }
.vscroll .thumb { height: 102px; background: #fff; border: 1px solid #ababab; }
.vscroll .down { margin-top: auto; }
.up::after, .down::after { content: ""; width: 7px; height: 4px; background: #777; clip-path: polygon(50% 0, 100% 100%, 0 100%); }
.down::after { clip-path: polygon(0 0, 100% 0, 50% 100%); }

/* sheet tabs */
.sheettabs { flex: none; height: 24px; display: flex; align-items: center; border: solid #c6c6c6; border-width: 1px 0; font-size: 13px; padding: 0 20px 2px 0; }
.prev, .next { width: 22px; }
.prev { margin-left: 12px; }
.next { margin-right: 22px; }
.prev::after, .next::after, .left::after, .right::after { content: ""; width: 4px; height: 7px; background: #bbb; clip-path: polygon(0 50%, 100% 0, 100% 100%); }
.next::after { background: #217346; clip-path: polygon(0 0, 100% 50%, 0 100%); }
.st { height: 19px; padding: 0 8px; margin-left: 2px; }
.plain { margin: 0; padding: 0 9px 0 10px; border-right: 1px solid #bbb; }
.plain.first { border-left: 1px solid #bbb; padding: 0 9px; }
.olive { background: #808000; color: #fff; padding: 0 7px; }
.peach { background: #ffcc99; color: #222; padding: 0 7px; }
.green { background: #008000; color: #fff; }
.teal { background: #008080; color: #fff; }
.orange { background: #ff9900; color: #222; }
.maroon { background: #800000; color: #fff; }
.green + .plain, .current + .plain, .maroon + .plain { margin-left: 2px; }
.current { margin-left: 1px; background: #fff; color: #0e5c2f; font-weight: 700; font-size: 12px; border-bottom: 1px solid #217346; height: 20px; }
.cut { border: 0; gap: 6px; padding-right: 0; }
.add { margin-left: auto; }
.sheettabs .dots { margin: 0 11px 0 15px; }
.hscroll { display: flex; width: 67px; height: 17px; }
.hscroll button { width: 17px; background: #fff; border: 1px solid #c6c6c6; }
.hscroll .thumb { width: 31px; background: #fff; border: 1px solid #ababab; margin-right: auto; }
.left::after, .right::after { background: #666; }
.right::after { clip-path: polygon(0 0, 100% 50%, 0 100%); }

/* status bar */
.status { flex: none; height: 21px; display: flex; align-items: center; padding: 0 6px 0 5px; background: #f1f1f1; font-size: 11px; color: #555; }
.macro { margin-left: 35px; }
.views { margin-left: auto; display: flex; height: 100%; }
.views button { width: 30px; }
.views .on { background: #c9c9c9; }
.zm { width: 8px; height: 8px; background: linear-gradient(#555, #555) center / 8px 2px no-repeat; }
.minus { margin: 0 4px; }
.plus { background: linear-gradient(#555, #555) center / 8px 2px no-repeat, linear-gradient(#555, #555) center / 2px 8px no-repeat; margin-left: 5px; }
.status input { appearance: none; width: 100px; height: 12px; background: linear-gradient(#c6c6c6, #c6c6c6) center / 100% 1px no-repeat; }
.status input::-webkit-slider-thumb { appearance: none; width: 4px; height: 11px; background: #666; }
.pctv { margin-left: 9px; white-space: nowrap; }

/* taskbar */
.taskbar { flex: none; height: 40px; display: flex; background: linear-gradient(90deg, #22323c, #26323a 60%, #1c2a32); color: #fff; }
.sys { width: 48px; }
.app { width: 50px; border: solid transparent; border-width: 2px 0; background-clip: padding-box; }
.app.first { margin-left: 3px; }
.app.run { background: linear-gradient(#76b9ed, #76b9ed) center bottom / 42px 2px no-repeat border-box; }
.app.cur { background: linear-gradient(#76b9ed, #76b9ed) center bottom / 100% 2px no-repeat border-box, #46545d; }
.tray { margin-left: auto; display: flex; padding-right: 5px; }
.tray button { width: 32px; }
.tray .lang { width: 44px; }
.tray .clock { width: 62px; flex-direction: column; line-height: 18px; }
.tray .note { position: relative; width: 54px; padding-top: 4px; }
.note span { position: absolute; left: 26px; top: 18px; width: 10px; text-align: center; }
```
